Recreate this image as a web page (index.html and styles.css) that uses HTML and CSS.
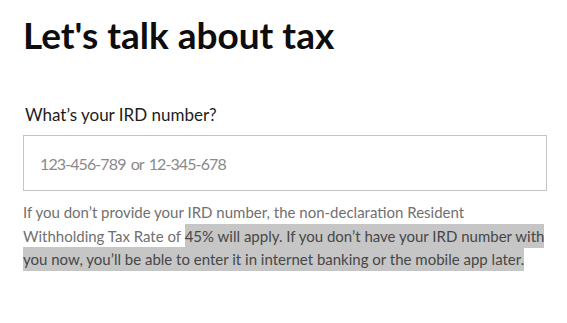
FILE: index.html
```html
<!DOCTYPE html>
<html lang="en">
<head>
  <meta charset="UTF-8">
  <meta name="viewport" content="width=device-width, initial-scale=1.0">
  <title>Let's talk about tax</title>
  <link rel="stylesheet" href="styles.css">
</head>
<body>
  <div class="page">
    <h1>Let's talk about tax</h1>
    <form class="tax-form">
      <label class="field-label" for="ird">What’s your IRD number?</label>
      <input class="field-input" id="ird" type="text" placeholder="123-456-789 or 12-345-678">
      <p class="help">If you don’t provide your IRD number, the non-declaration Resident Withholding Tax Rate of <span class="picked">45% will apply. If you don’t have your IRD number with you now, you’ll be able to enter it in internet banking or the mobile app later.</span></p>
    </form>
  </div>
</body>
</html>
```

FILE: styles.css
```css
body {
  margin: 0;
  background-color: #fff;
  font-family: Lato, "Noto Sans", sans-serif;
  color: #1a1a1a;
}
.page {
  width: 524px;
  padding: 0 23px;
}
h1 {
  margin: 0;
  padding-top: 12px;
  font-size: 37px;
  font-weight: 700;
  line-height: 46px;
  color: #0d0d0d;
}
.tax-form {
  margin-top: 46px;
}
.field-label {
  display: block;
  font-size: 17px;
  line-height: 22px;
  margin-left: 2px;
  color: #1c1c1c;
}
.field-input {
  display: block;
  box-sizing: border-box;
  width: 524px;
  height: 56px;
  margin-top: 9px;
  padding: 0 16px;
  border: 1px solid #c4c4c4;
  font-family: inherit;
  font-size: 16px;
  letter-spacing: -0.9px;
  word-spacing: 2px;
  color: #333;
  outline: none;
}
.field-input::placeholder {
  color: #8a8a8a;
}
.help {
  margin: 10px 0 0;
  font-size: 15px;
  line-height: 23.5px;
  color: #707070;
}
.picked {
  background-color: #c6c6c6;
  box-shadow: 0 3px 0 #c6c6c6, 0 -3px 0 #c6c6c6;
  color: #474747;
}
```
